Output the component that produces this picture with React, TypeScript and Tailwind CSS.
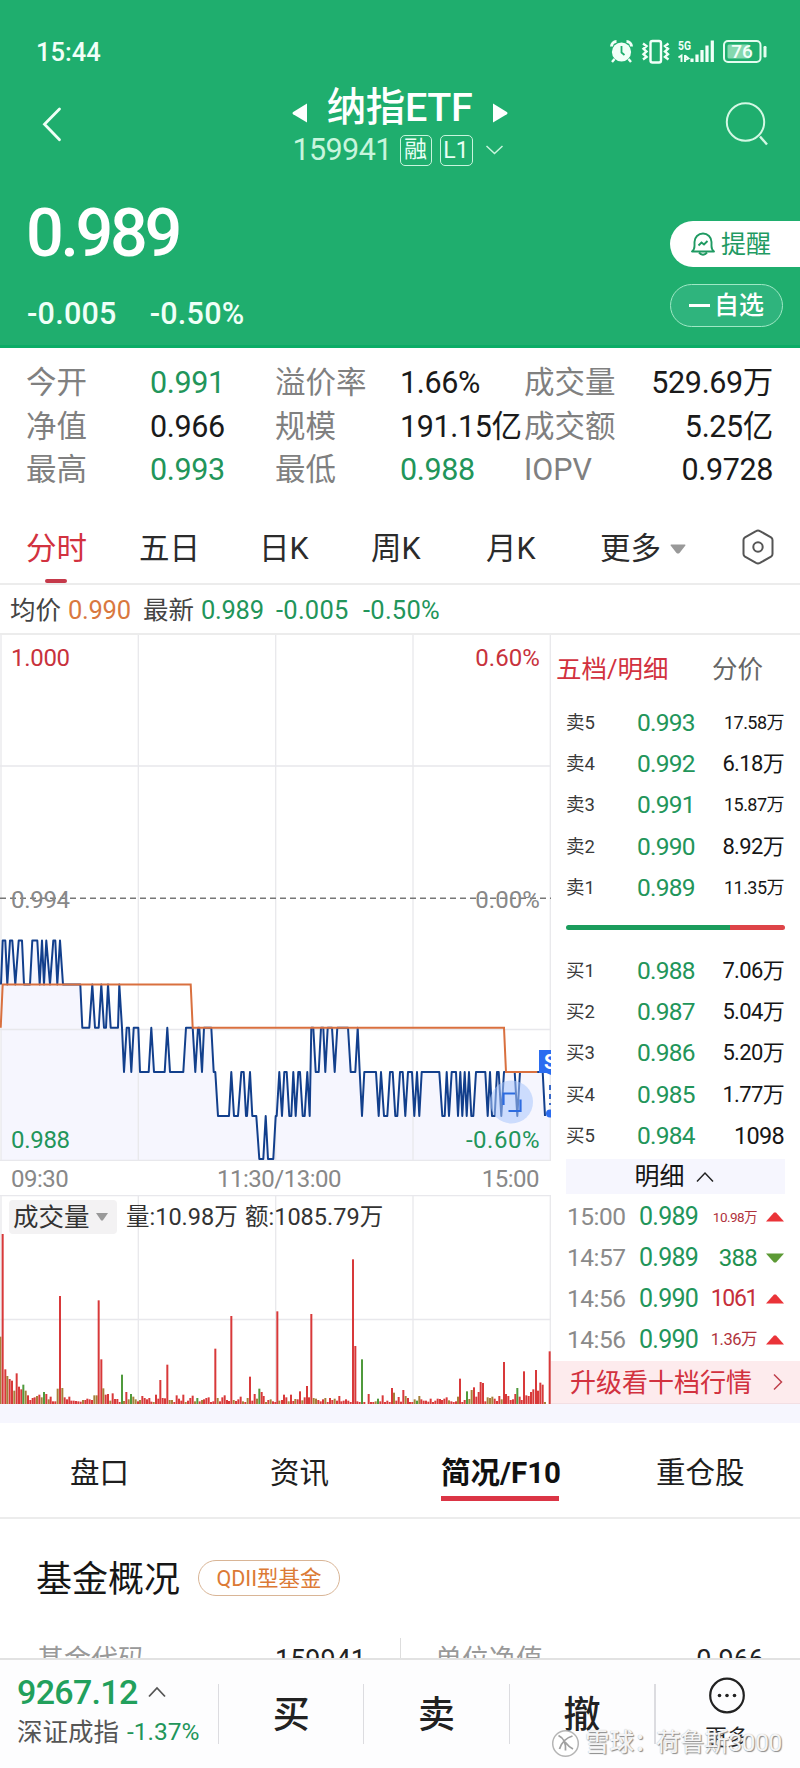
import React from "react";

const stats = [
  { label: "今开", value: "0.991", tone: "green" },
  { label: "溢价率", value: "1.66%" },
  { label: "成交量", value: "529.69万", end: true },
  { label: "净值", value: "0.966" },
  { label: "规模", value: "191.15亿" },
  { label: "成交额", value: "5.25亿", end: true },
  { label: "最高", value: "0.993", tone: "green" },
  { label: "最低", value: "0.988", tone: "green" },
  { label: "IOPV", value: "0.9728", end: true },
];

const sells = [
  { label: "卖5", price: "0.993", qty: "17.58万" },
  { label: "卖4", price: "0.992", qty: "6.18万" },
  { label: "卖3", price: "0.991", qty: "15.87万" },
  { label: "卖2", price: "0.990", qty: "8.92万" },
  { label: "卖1", price: "0.989", qty: "11.35万" },
];

const buys = [
  { label: "买1", price: "0.988", qty: "7.06万" },
  { label: "买2", price: "0.987", qty: "5.04万" },
  { label: "买3", price: "0.986", qty: "5.20万" },
  { label: "买4", price: "0.985", qty: "1.77万" },
  { label: "买5", price: "0.984", qty: "1098" },
];

const trades = [
  { time: "15:00", price: "0.989", qty: "10.98万", up: true, size: "text-[13.5px] tracking-[-0.04em] text-[#b0323c]" },
  { time: "14:57", price: "0.989", qty: "388", up: false, size: "text-[24px] tracking-[-0.03em] text-[#1f9150]" },
  { time: "14:56", price: "0.990", qty: "1061", up: true, size: "text-[23px] tracking-[-0.06em] text-[#c62f3a]" },
  { time: "14:56", price: "0.990", qty: "1.36万", up: true, size: "text-[16.5px] tracking-[-0.03em] text-[#b0323c]" },
];

// price levels of the intraday line, relative to the chart top
const levels: Record<string, number> = { A: 305.5, B: 349.5, C: 392.8, D: 437, E: 481, F: 524 };

// level + x, in thirds of a pixel
const priceLine =
  "B3 A8 A16 B22 A30 A37 B46 A56 A66 B72 B90 A97 A112 B119 A126 B132 A139 B150 A160 A166 B172 A180 B189 B241 " +
  "C247 C268 B277 C285 C296 B304 C312 C318 B324 C332 C354 B358 C366 D372 C380 C387 D394 C401 C415 D420 D446 " +
  "C454 D462 D494 C502 D510 D550 C558 C578 D586 C594 C598 D606 C612 C634 D641 D646 E654 E687 D694 E702 E714 " +
  "D724 D731 E738 E741 D750 E757 E769 F778 F790 E797 F804 F820 E827 E830 D838 E846 D853 D860 E868 E874 D880 " +
  "E887 D895 D900 E908 E914 D922 E929 C934 C940 D947 D956 C963 C970 D976 C983 C996 D1004 C1012 C1044 D1052 " +
  "D1066 C1073 D1079 E1086 D1093 D1128 E1136 D1143 E1152 E1162 D1170 D1178 E1186 E1192 D1200 D1208 E1216 " +
  "D1224 D1236 E1243 D1251 E1258 D1265 D1318 E1327 E1334 D1340 E1347 D1355 D1368 E1374 D1381 E1387 D1394 " +
  "E1400 D1407 E1414 E1420 D1428 D1456 E1463 D1470 E1476 E1484 D1491 D1496 E1504 D1512 D1544 E1552 D1560 D1628 E1635";

const avgLine = "C2 B8 B572 C578 C1512 D1518 D1612";

// x:height pairs in thirds of a pixel, o = flat minute, g = falling minute
const volumes =
  "1:202o 8:510 16:104 22:84o 29:75 36:70 43:40o 50:92 57:52 64:44 70:58g 77:40o 84:26 91:12 98:18 104:20 111:24o 118:28 " +
  "125:20o 132:36g 139:30 146:14o 152:22 159:8 166:8 173:46o 180:324 187:48o 194:20 201:14 208:22 214:10 221:10 228:9 " +
  "235:8 242:7 249:12o 256:12 262:16 269:14 276:12 283:26o 290:26o 296:311 304:134 310:47o 317:28 324:30 331:10o 338:32 " +
  "345:15 352:15 359:6 366:88g 372:9o 379:36 386:14o 393:30g 400:22o 407:14o 414:8 420:12o 427:24 434:18 441:14 448:18 " +
  "454:7 461:6o 468:28 475:16 481:72 488:18 495:17 502:118 509:12o 516:12o 523:6 530:26 537:16 544:10 550:28 557:6o " +
  "564:10 571:18 578:25 585:8o 592:18g 599:8 606:12o 612:14 619:18 626:20 633:6 640:8 646:166 653:18o 660:8 667:20 " +
  "674:26 681:12 687:9 694:264 701:12o 708:9 715:14 722:22 729:8o 736:6 743:18o 750:82 757:10 764:30 771:16o 778:46g " +
  "785:36 791:24 798:6o 805:12 812:14o 819:8 826:6 832:278 838:10o 846:12 852:28 859:20 866:8o 873:28 880:9 886:15o " +
  "893:14 900:38 907:11o 914:20 921:54 927:20 934:270 941:18o 948:16o 955:12 962:8 969:14 976:18o 983:6 990:18 997:12 " +
  "1004:16o 1011:10 1018:24 1024:8 1031:10 1038:14 1045:10 1052:6 1059:434 1066:174 1072:8 1079:6 1086:134g 1093:6 " +
  "1106:30 1113:6 1120:6 1127:8o 1134:16g 1141:8 1148:26 1155:6 1162:10 1169:6 1176:48 1182:34o 1189:10 1196:21 1203:7 " +
  "1210:42 1217:24o 1224:18 1230:6 1237:6 1244:14o 1251:10g 1258:24o 1264:14 1271:10 1278:10 1285:7 1292:16 1299:6 " +
  "1306:10 1313:16 1320:15 1326:12 1333:16 1340:20 1347:11o 1354:8 1361:6 1368:8 1374:22o 1380:76 1387:6 1394:12 " +
  "1401:38g 1408:15o 1415:42o 1422:50 1429:22 1436:36 1442:66 1449:63 1456:8 1463:20o 1470:18o 1477:22o 1484:16 1491:9 " +
  "1498:24 1505:14o 1512:126 1518:30 1525:24 1532:12 1539:14 1546:30 1552:48g 1559:22 1565:12 1572:98 1579:26 1586:24 " +
  "1593:36 1600:44 1608:102 1614:40 1621:64 1628:58 1635:6o 1649:158";

const toPoints = (line: string) =>
  line
    .split(" ")
    .map((p) => `${(Number(p.slice(1)) / 3).toFixed(1)},${levels[p[0]]}`)
    .join(" ");

const StatusIcons = () => (
  <svg width="160" height="30" viewBox="608 36 160 30" fill="none" className="shrink-0">
    {/* alarm */}
    <circle cx="621.5" cy="52" r="9.6" fill="#f1fff8" />
    <path d="M611.5 46.5a5 5 0 0 1 5-5M631.5 46.5a5 5 0 0 0-5-5" stroke="#f1fff8" strokeWidth="3" />
    <path d="M614.5 59l-2.5 3M628.5 59l2.5 3" stroke="#f1fff8" strokeWidth="2.4" />
    <path d="M621.5 46v6.5l3 2.5" stroke="#1fae6e" strokeWidth="1.8" />
    {/* vibrate */}
    <rect x="650.5" y="41" width="10.5" height="21.5" rx="2" stroke="#f1fff8" strokeWidth="2.4" />
    <path
      d="M643 43.5l3.500 2.600-3 2.700 3 2.700-3 2.700 3 2.700-3.500 2.600M668.500 43.5l-3.500 2.600 3 2.700-3 2.700 3 2.700-3 2.700 3.500 2.600"
      stroke="#f1fff8"
      strokeWidth="2.4"
    />
    {/* signal */}
    <text x="678" y="50" fontSize="13" fontWeight="700" fill="#f1fff8" fontFamily="Roboto" textLength="13" lengthAdjust="spacingAndGlyphs">
      5G
    </text>
    <path d="M678.5 57.5l3-2v6.5M685 55v7M685 55.5l3.5 3-3.5 1.5" stroke="#f1fff8" strokeWidth="1.9" />
    <path d="M692 58.5V62M697 54.5V62M702 50V62M707 45.5V62M712.3 40.5V62" stroke="#f1fff8" strokeWidth="3.2" />
    {/* battery */}
    <rect x="724" y="41" width="36.5" height="21" rx="4" stroke="#e4fcef" strokeWidth="2" />
    <rect x="727.5" y="44.5" width="22" height="14" rx="1.5" fill="#85d8af" />
    <rect x="763.5" y="46" width="3" height="11.5" rx="1.2" fill="#e4fcef" />
    <text x="742" y="58.4" fontSize="19" fontWeight="500" fill="#f1fff8" textAnchor="middle" fontFamily="Roboto">
      76
    </text>
  </svg>
);

const Header = () => (
  <header className="h-[348px] bg-[#1fae6e] border-b-3 border-[#0bac66] text-white flex flex-col">
    <div className="h-[84px] pt-[36px] pl-[36px] pr-8 flex justify-between">
      <span className="text-[25.5px] leading-[32px] font-medium text-[#f1fff8]">15:44</span>
      <StatusIcons />
    </div>
    <div className="h-[86px] pl-[40px] pr-[30px] flex">
      <svg width="24" height="40" viewBox="0 0 24 40" fill="none" className="mt-5 shrink-0">
        <path d="M19.5 5L4.5 20.2l15 15.5" stroke="#effff6" strokeWidth="2.8" strokeLinecap="round" />
      </svg>
      <div className="flex flex-col w-[228px] ml-[221.5px]">
        <div className="h-[47px] flex items-center justify-between px-[6px]">
          <svg width="16" height="22" viewBox="0 0 16 22" className="mt-[10px]">
            <path d="M15 1.5v19L1.2 12.3q-1.4-1.1 0-2.3z" fill="white" />
          </svg>
          <h1 className="text-[39.5px] leading-[47px] font-medium tracking-[-0.01em] whitespace-nowrap">纳指ETF</h1>
          <svg width="16" height="22" viewBox="0 0 16 22" className="mt-[10px]">
            <path d="M1 1.5v19l13.8-8.2q1.4-1.1 0-2.3z" fill="white" />
          </svg>
        </div>
        <div className="mt-[1px] h-9 flex items-center text-[#c8f5dd] pl-[7px]">
          <span className="text-[30.5px] leading-9 tracking-[-0.02em] w-[107px]">159941</span>
          <span className="h-[31px] w-8 shrink-0 border-[1.5px] border-[#c8f5dd] rounded-[5px] text-[23px] leading-[28px] text-center text-[#e8fff4]">
            融
          </span>
          <span className="ml-2 h-[31px] w-[33px] shrink-0 border-[1.5px] border-[#c8f5dd] rounded-[5px] text-[23px] leading-[29px] text-center text-[#e8fff4]">
            L1
          </span>
          <svg width="20" height="12" viewBox="0 0 20 12" fill="none" className="ml-3 shrink-0">
            <path d="M1.5 2l8 7.5 8-7.5" stroke="#c8f5dd" strokeWidth="1.5" />
          </svg>
        </div>
      </div>
      <svg width="46" height="46" viewBox="0 0 46 46" fill="none" className="mt-4 ml-auto shrink-0">
        <circle cx="21.5" cy="22" r="18.7" stroke="#d3f8e4" strokeWidth="2" />
        <path d="M36 36.5l7 8" stroke="#d3f8e4" strokeWidth="2.4" />
      </svg>
    </div>
    <div className="flex justify-between pl-[27px]">
      <div>
        <div className="-ml-[1px] mt-[23px] text-[66.5px] leading-[80px] font-medium tracking-[-0.05em]">0.989</div>
        <div className="mt-[23px] flex gap-[33px] text-[30.5px] leading-9 font-medium tracking-[0.008em] text-[#effff7]">
          <span>-0.005</span>
          <span>-0.50%</span>
        </div>
      </div>
      <div className="w-[130px] pt-[51px]">
        <button className="h-[46px] w-full bg-white rounded-l-full text-[#1f9a62] flex items-center pl-[20px] gap-[5px]">
          <svg width="26" height="26" viewBox="0 0 26 26" fill="none" stroke="#1f9a62" strokeWidth="1.9">
            <path d="M2 20.5h22c-2-1.5-2.5-3-2.5-5.5v-4a8.5 8.5 0 0 0-17 0v4c0 2.5-.5 4-2.5 5.5z" strokeLinejoin="round" />
            <path d="M9 21.5q4 4.500 8 0M8.5 14.5l3-3 2.5 2 3.5-3.5" />
          </svg>
          <span className="text-[25px] leading-[46px] pt-[1px]">提醒</span>
        </button>
        <button className="mt-[17px] h-[43px] w-[113px] border-[1.5px] border-[#9fe8c5] bg-[#2fb47d] rounded-full flex items-center pl-[18px] gap-1">
          <span className="w-[21px] h-[2.5px] bg-white" />
          <span className="text-[25px] leading-[40px] pt-[1px] font-medium">自选</span>
        </button>
      </div>
    </div>
  </header>
);

const Stats = () => (
  <section className="h-[159px] pt-[13px] pl-[26px] pr-[27px] grid grid-cols-[124px_125px_125px_124px_125px_1fr] auto-rows-[43.6px] text-[30.5px] leading-[43px] whitespace-nowrap">
    {stats.map((s) => (
      <React.Fragment key={s.label}>
        <span className="text-[#808080]">{s.label}</span>
        <span
          className={`tracking-[-0.012em] ${s.tone === "green" ? "text-[#22955a]" : "text-[#1a1a1a]"} ${
            s.end ? "justify-self-end" : ""
          }`}
        >
          {s.value}
        </span>
      </React.Fragment>
    ))}
  </section>
);

const PeriodTabs = () => (
  <nav className="h-[78px] border-b-2 border-[#ececec] pl-[26px] grid grid-cols-[113px_120px_112px_115px_114px_142px_1fr] text-[30.5px] leading-[83px] text-[#2b2b2b] whitespace-nowrap">
    <span className="text-[#d2323f] relative">
      分时
      <i className="absolute left-[19px] top-[72px] w-[22px] h-1 rounded bg-[#c5394a]" />
    </span>
    <span>五日</span>
    <span>日K</span>
    <span>周K</span>
    <span>月K</span>
    <span className="flex items-center gap-[9px] h-[83px]">
      更多
      <svg width="16" height="10" viewBox="0 0 16 10">
        <path d="M1 0.5h14q1 0 0 1.5l-5.5 7q-1.5 1.2-3 0L1 2q-1-1.5 0-1.5z" fill="#999" />
      </svg>
    </span>
    <svg width="32" height="36" viewBox="0 0 32 36" fill="none" stroke="#555" strokeWidth="2" className="mt-[22px]">
      <path d="M16 1.5q1 0 2 .6l11 6.2q1.5 1 1.5 2.7v14q0 1.7-1.5 2.7l-11 6.2q-2 1-4 0L3 27.7Q1.5 26.7 1.5 25V11Q1.500 9.3 3 8.3l11-6.2q1-.6 2-.6z" />
      <circle cx="16" cy="18" r="4.7" />
    </svg>
  </nav>
);

const PriceSummary = () => (
  <div className="h-[50px] border-b-2 border-[#ececec] pl-[10px] flex text-[25.5px] leading-[50px] text-[#22955a] whitespace-nowrap tracking-[-0.01em]">
    <span className="w-[58px] text-[#444] tracking-normal">均价</span>
    <span className="w-[75px] text-[#d9783f]">0.990</span>
    <span className="w-[58px] text-[#444] tracking-normal">最新</span>
    <span className="w-[75px]">0.989</span>
    <span className="w-[87px] tracking-[0.01em]">-0.005</span>
    <span className="tracking-[0.01em]">-0.50%</span>
  </div>
);

const PriceChart = () => (
  <svg width="551" height="526" viewBox="0 0 551 526" fill="none" className="block" fontFamily="Roboto" fontSize="24">
    <polygon points={`1,525 1,350 ${toPoints(priceLine)} 551,481 551,525`} fill="#f6f6fe" />
    <path d="M1 0v525M138.3 0v525M275.7 0v525M413 0v525M550.3 0v525M0 131h551M0 394.5h551M0 525.3h551" stroke="#e8e8ec" strokeWidth="1.3" />
    <path d="M0 263.2h551" stroke="#777" strokeWidth="1.5" strokeDasharray="6 4" />
    <polyline points={toPoints(priceLine)} stroke="#123f8c" strokeWidth="2" strokeLinejoin="round" />
    <polyline points={toPoints(avgLine)} stroke="#d9703f" strokeWidth="2" />
    <g letterSpacing="-0.3">
      <text x="11" y="30.5" fill="#c8323c">1.000</text>
      <text x="540" y="30.5" fill="#c8323c" textAnchor="end" letterSpacing="0.1">0.60%</text>
      <text x="11" y="273" fill="#888">0.994</text>
      <text x="540" y="273" fill="#888" textAnchor="end" letterSpacing="0.1">0.00%</text>
      <text x="11" y="512.5" fill="#22955a">0.988</text>
      <text x="540" y="512.5" fill="#22955a" textAnchor="end" letterSpacing="0.5">-0.60%</text>
    </g>
    {/* floating trade badge */}
    <circle cx="511.5" cy="467" r="21.5" fill="#a9c6fb" fillOpacity="0.55" />
    <path d="M503.5 470V458.5H515M508.5 476H520.5V464.5" stroke="#2d6ce0" strokeWidth="2.2" />
    {/* sell marker at the right edge */}
    <path d="M550 450v20" stroke="#3868c8" strokeWidth="2" strokeDasharray="5 4" />
    <rect x="539" y="415" width="12" height="23" fill="#2a6cf0" />
    <path d="M551 440l-7-3 7 0z" fill="#2a6cf0" />
    <text x="544" y="434" fontSize="20" fontWeight="700" fill="white">S</text>
    <circle cx="550" cy="478.5" r="4" fill="#2a6cf0" />
  </svg>
);

const VolumeChart = () => (
  <div className="relative h-[209px]">
    <svg width="551" height="209" viewBox="0 0 551 209" className="block">
      <path d="M0 .7h551M0 124.5h551M1 0v209M138.3 0v209M275.7 0v209M413 0v209M550.3 0v209" stroke="#e8e8ec" strokeWidth="1.3" />
      {volumes.split(" ").map((v) => {
        const [x, h] = v.split(":");
        const height = parseInt(h) / 3;
        const fill = h.endsWith("o") ? "#a5803a" : h.endsWith("g") ? "#4f9a3c" : "#d8393a";
        return <rect key={x} x={Number(x) / 3 - 1} y={209 - height} width="2" height={height} fill={fill} />;
      })}
    </svg>
    <div className="absolute left-[9px] top-[5px] flex items-center h-[34px] whitespace-nowrap text-[#333]">
      <span className="h-[34px] w-[108px] rounded-[4px] bg-[#f3f2f3] pl-[4px] flex items-center gap-[6px] text-[25.5px] leading-[34px]">
        成交量
        <svg width="12" height="8" viewBox="0 0 12 8">
          <path d="M0 0h12L6.8 7.5H5.2z" fill="#999" />
        </svg>
      </span>
      <span className="ml-[9px] w-[119px] text-[23.5px] leading-[36px]">量:10.98万</span>
      <span className="text-[23.5px] leading-[36px]">额:1085.79万</span>
    </div>
  </div>
);

const OrderRows = ({ rows }: { rows: typeof sells }) => (
  <div className="pl-[15px] pr-[16px]">
    {rows.map((r) => (
      <div key={r.label} className="h-[41.3px] flex items-center leading-10 whitespace-nowrap">
        <span className="w-[71px] text-[18.5px] text-[#3a3a3a]">{r.label}</span>
        <span className="text-[24.5px] tracking-[-0.03em] text-[#22955a]">{r.price}</span>
        <span
          className={`ml-auto text-[#161616] tracking-[-0.03em] ${
            r.qty.length > 5 ? "text-[18px]" : r.qty.endsWith("万") ? "text-[22px]" : "text-[23.5px]"
          }`}
        >
          {r.qty}
        </span>
      </div>
    ))}
  </div>
);

const OrderBook = () => (
  <aside className="w-[249px] h-[769px] flex flex-col">
    <div className="h-[67px] pl-[5px] flex text-[25.5px] leading-[68px] whitespace-nowrap">
      <span className="w-[156px] text-[#d2323f]">五档/明细</span>
      <span className="text-[#666]">分价</span>
    </div>
    <OrderRows rows={sells} />
    <div className="ml-[15px] mt-[17px] mb-[19.5px] h-[5px] w-[219px] shrink-0 rounded-full overflow-hidden flex">
      <i className="w-[164px] bg-[#1b9c5c]" />
      <i className="flex-1 bg-[#de4448]" />
    </div>
    <OrderRows rows={buys} />
    <div className="ml-[15px] mt-[3px] h-[35px] w-[219px] shrink-0 bg-[#f6f6fe] flex items-center justify-center gap-[11px] pr-[3px] text-[25px] leading-[36px] text-[#161616]">
      明细
      <svg width="18" height="12" viewBox="0 0 18 12" fill="none">
        <path d="M1 10.5L9 2l8 8.5" stroke="#222" strokeWidth="1.5" />
      </svg>
    </div>
    <div className="pl-[16px] pr-[16px] pt-[1.5px]">
      {trades.map((t, i) => (
        <div key={i} className="h-[41.2px] flex items-center leading-10 whitespace-nowrap">
          <span className="w-[72px] text-[24.5px] tracking-[-0.02em] text-[#8a8a8a]">{t.time}</span>
          <span className="text-[25px] tracking-[-0.03em] text-[#22955a]">{t.price}</span>
          <span className={`ml-auto ${t.size}`}>{t.qty}</span>
          <svg width="18" height="10" viewBox="0 0 18 10" className="ml-[9px]">
            <path d={t.up ? "M0 9.5L8 .5h2l8 9z" : "M0 .5h18l-8 9H8z"} fill={t.up ? "#ea3338" : "#5c9a35"} />
          </svg>
        </div>
      ))}
    </div>
    <button className="flex-1 bg-[#fdebed] border-b border-[#f3dfe3] pl-[19px] pr-[17px] flex items-center justify-between text-[26px] leading-10 text-[#d2323f]">
      <span className="pt-[2px]">升级看十档行情</span>
      <svg width="10" height="18" viewBox="0 0 10 18" fill="none">
        <path d="M1 1.5l7.5 7.5L1 16.5" stroke="#c0404c" strokeWidth="1.5" />
      </svg>
    </button>
  </aside>
);

const DetailTabs = () => (
  <nav className="h-[96px] border-b-2 border-[#ececec] pl-[70px] grid grid-cols-[200px_171px_215px_1fr] text-[29.5px] leading-[101px] text-[#1e1e1e] whitespace-nowrap">
    <span>盘口</span>
    <span>资讯</span>
    <span className="relative font-bold text-[#111]">
      简况/F10
      <i className="absolute left-0 top-[73px] w-[118px] h-[5px] bg-[#db3545]" />
    </span>
    <span>重仓股</span>
  </nav>
);

const FundOverview = () => (
  <section className="h-[139px] overflow-hidden">
    <div className="pt-[36px] h-[119px] pl-[36px] flex items-start">
      <h2 className="text-[36px] leading-[50px] text-[#161616]">基金概况</h2>
      <span className="ml-[18px] mt-[5px] h-9 w-[142px] rounded-full border border-[#d9b596] text-center text-[21.5px] leading-[35px] text-[#dc7a35]">
        QDII型基金
      </span>
    </div>
    <div className="flex h-9 text-[27px] leading-[44px] whitespace-nowrap">
      <div className="w-[400px] flex justify-between pl-[37px] pr-[34px]">
        <span className="text-[#999]">基金代码</span>
        <span className="text-[#222]">159941</span>
      </div>
      <div className="flex-1 border-l border-[#ddd] flex justify-between pl-[34px] pr-[36px]">
        <span className="text-[#999]">单位净值</span>
        <span className="text-[#222]">0.966</span>
      </div>
    </div>
  </section>
);

const BottomBar = () => (
  <footer className="relative h-[110px] bg-[#fdfdfe] border-t-2 border-[#e2e2e2] flex text-[#222]">
    <div className="w-[218px] pl-[17px] pt-[11px] whitespace-nowrap">
      <div className="flex items-center text-[34px] leading-[42px] font-medium tracking-[-0.02em] text-[#22a05c]">
        9267.12
        <svg width="18" height="12" viewBox="0 0 18 12" fill="none" className="ml-[10px]">
          <path d="M1 10.5L9 2l8 8.5" stroke="#555" strokeWidth="1.8" />
        </svg>
      </div>
      <div className="flex text-[25.5px] leading-[38px] text-[#555]">
        深证成指
        <span className="ml-2 text-[24.5px] text-[#22955a]">-1.37%</span>
      </div>
    </div>
    {["买", "卖", "撤"].map((name) => (
      <button
        key={name}
        className="mt-6 h-[60px] w-[145.4px] border-l-[1.5px] border-[#dcdce0] text-[37px] leading-[64px] font-medium"
      >
        {name}
      </button>
    ))}
    <button className="mt-[17px] flex-1 flex flex-col items-center relative">
      <i className="absolute left-0 top-[7px] h-[60px] w-[1.5px] bg-[#dcdce0]" />
      <svg width="38" height="38" viewBox="0 0 38 38" fill="none">
        <circle cx="19" cy="18.5" r="16.8" stroke="#222" strokeWidth="2.2" />
        <circle cx="11.5" cy="18.5" r="1.8" fill="#222" />
        <circle cx="19" cy="18.5" r="1.8" fill="#222" />
        <circle cx="26.5" cy="18.5" r="1.8" fill="#222" />
      </svg>
      <span className="mt-[8px] text-[22px] leading-[30px]">更多</span>
    </button>
    {/* watermark */}
    <div className="absolute left-[551px] top-[67px] flex items-center gap-[5px] text-[24.5px] leading-[32px] text-white/90 whitespace-nowrap [text-shadow:1px_1px_1px_#8a8a8a,0_0_1px_#aaa]">
      <svg width="29" height="29" viewBox="0 0 29 29" fill="none">
        <circle cx="14.5" cy="14.5" r="12.8" fill="#ffffffcc" stroke="#b5b5b5" strokeWidth="1.5" />
        <path d="M7.5 6.5q8 4 7 15M21.5 7q-10 3-13 13M14 13q4 5 8 7" stroke="#a0a0a0" strokeWidth="1.8" />
      </svg>
      <span className="w-[66px] font-medium">雪球：</span>
      <span className="tracking-[-0.015em]">荷鲁斯3000</span>
    </div>
  </footer>
);

const App = () => {
  return (
    <div className="w-[800px] h-[1768px] overflow-hidden bg-white font-['Roboto','Noto_Sans_CJK_SC',sans-serif]">
      <Header />
      <Stats />
      <PeriodTabs />
      <PriceSummary />
      <main className="flex">
        <div className="w-[551px]">
          <PriceChart />
          <div className="h-[34px] flex justify-between pl-[11px] pr-[12px] text-[24px] leading-[36px] tracking-[-0.02em] text-[#888]">
            <span>09:30</span>
            <span className="ml-[8px]">11:30/13:00</span>
            <span>15:00</span>
          </div>
          <VolumeChart />
        </div>
        <OrderBook />
      </main>
      <div className="h-[19px] bg-[#f6f6fe]" />
      <DetailTabs />
      <FundOverview />
      <BottomBar />
    </div>
  );
};

export default App;
